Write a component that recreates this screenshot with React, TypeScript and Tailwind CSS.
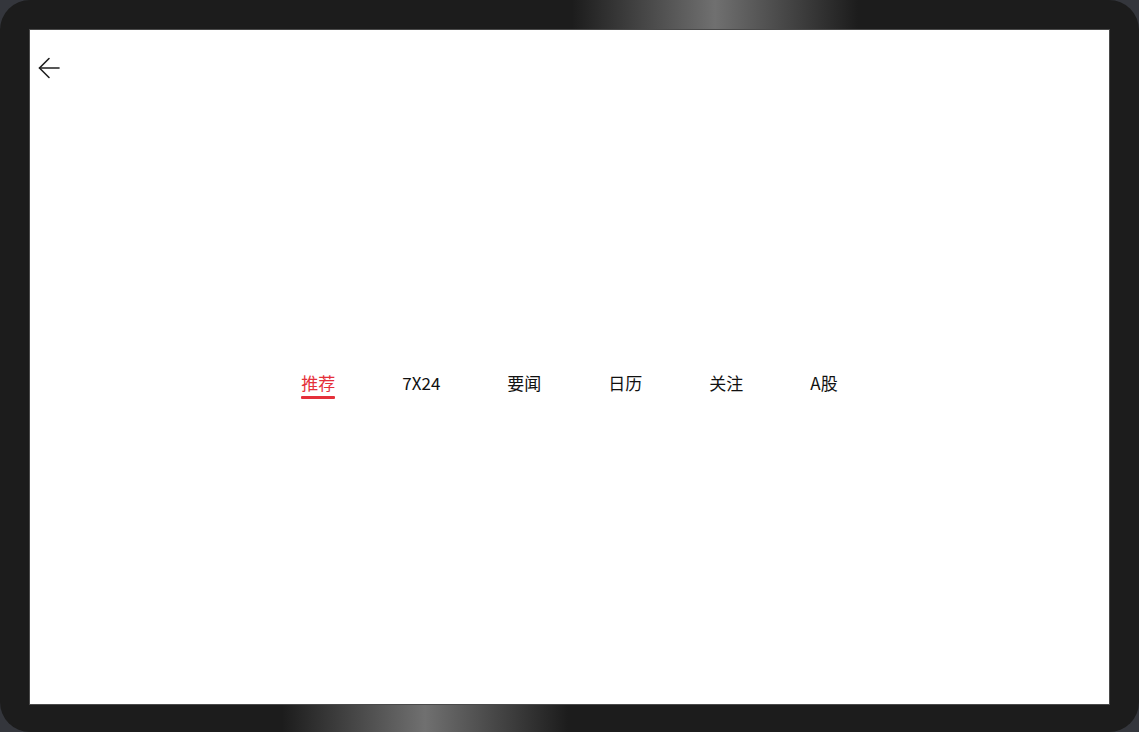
import React from "react";

const tabs = ["推荐", "7X24", "要闻", "日历", "关注", "A股"];

function BackArrow() {
  return (
    <svg width="22" height="22" viewBox="0 0 22 22" fill="none" stroke="#1f1f1f" strokeWidth="1.6" strokeLinecap="round" strokeLinejoin="round">
      <path d="M21 11H1.5" />
      <path d="M11 1.5L1.5 11L11 20.5" />
    </svg>
  );
}

export default function App() {
  return (
    <div className="w-[1139px] h-[732px] bg-[#34363c] overflow-hidden">
      <div className="relative w-full h-full rounded-[30px] bg-[#1c1c1c] pt-[29px] pl-[29px] pr-[29px] pb-[27px] flex">
        {/* bezel highlights */}
        <div className="absolute top-0 left-[572px] w-[286px] h-[29px] bg-linear-to-r from-transparent via-[#707070] to-transparent" />
        <div className="absolute bottom-0 left-[282px] w-[286px] h-[27px] bg-linear-to-r from-transparent via-[#707070] to-transparent" />

        <div className="relative flex-1 bg-white border border-[#4a4a4a] flex flex-col font-['Noto_Sans_CJK_SC','Noto_Sans',sans-serif]">
          <div className="pl-[8px] pt-[27px]">
            <BackArrow />
          </div>
          <div className="mt-[295px] flex items-start justify-center gap-[67px]">
            {tabs.map((t, i) => (
              <div key={t} className="flex flex-col">
                <span className={`text-[17px] leading-none font-normal ${i === 0 ? "text-[#e5303a]" : "text-[#111111]"}`}>
                  {t}
                </span>
                {i === 0 && <div className="mt-[5px] h-[2.5px] bg-[#e5303a] rounded-[1px]" />}
              </div>
            ))}
          </div>
        </div>
      </div>
    </div>
  );
}
